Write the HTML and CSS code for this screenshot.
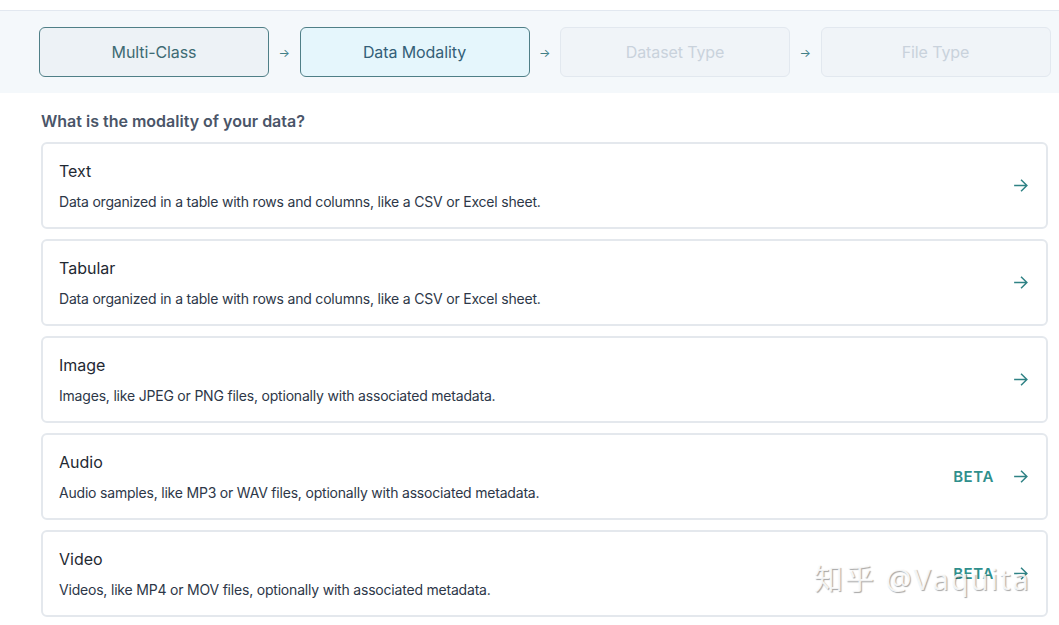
FILE: index.html
```html
<!DOCTYPE html>
<html lang="en">
<head>
  <meta charset="UTF-8" />
  <meta name="viewport" content="width=device-width, initial-scale=1.0" />
  <title>Data Modality</title>
  <link rel="stylesheet" href="styles.css">
</head>
<body>
  <div class="steps">
    <div class="step done">Multi-Class</div>
    <span class="step-arrow">&rarr;</span>
    <div class="step current">Data Modality</div>
    <span class="step-arrow">&rarr;</span>
    <div class="step todo">Dataset Type</div>
    <span class="step-arrow">&rarr;</span>
    <div class="step todo">File Type</div>
  </div>

  <div class="container">
    <h2 class="question">What is the modality of your data?</h2>

    <div class="option">
      <div class="option-text">
        <div class="option-title">Text</div>
        <div class="option-desc">Data organized in a table with rows and columns, like a CSV or Excel sheet.</div>
      </div>
      <svg class="go" viewBox="0 0 16 16"><path d="M2 8h12M8.5 2.5l5.5 5.5-5.5 5.5"/></svg>
    </div>

    <div class="option">
      <div class="option-text">
        <div class="option-title">Tabular</div>
        <div class="option-desc">Data organized in a table with rows and columns, like a CSV or Excel sheet.</div>
      </div>
      <svg class="go" viewBox="0 0 16 16"><path d="M2 8h12M8.5 2.5l5.5 5.5-5.5 5.5"/></svg>
    </div>

    <div class="option">
      <div class="option-text">
        <div class="option-title">Image</div>
        <div class="option-desc">Images, like JPEG or PNG files, optionally with associated metadata.</div>
      </div>
      <svg class="go" viewBox="0 0 16 16"><path d="M2 8h12M8.5 2.5l5.5 5.5-5.5 5.5"/></svg>
    </div>

    <div class="option">
      <div class="option-text">
        <div class="option-title">Audio</div>
        <div class="option-desc">Audio samples, like MP3 or WAV files, optionally with associated metadata.</div>
      </div>
      <span class="beta">BETA</span>
      <svg class="go" viewBox="0 0 16 16"><path d="M2 8h12M8.5 2.5l5.5 5.5-5.5 5.5"/></svg>
    </div>

    <div class="option">
      <div class="option-text">
        <div class="option-title">Video</div>
        <div class="option-desc">Videos, like MP4 or MOV files, optionally with associated metadata.</div>
      </div>
      <span class="beta">BETA</span>
      <svg class="go" viewBox="0 0 16 16"><path d="M2 8h12M8.5 2.5l5.5 5.5-5.5 5.5"/></svg>
    </div>
  </div>

  <div class="watermark">知乎 @Vaquita</div>
</body>
</html>
```

FILE: styles.css
```css
body {
  font-family: Inter, 'Noto Sans', sans-serif;
  margin: 0;
  padding: 10px 0 0;
  background-color: #fff;
  color: #2d3748;
  position: relative;
  overflow: hidden;
}
.steps {
  display: flex;
  align-items: center;
  padding: 16px 0 16px 39px;
  background-color: #f4f8fb;
  border-top: 1px solid #e2e8f0;
}
.step {
  box-sizing: border-box;
  flex: 0 0 230px;
  height: 50px;
  display: flex;
  align-items: center;
  justify-content: center;
  border-radius: 6px;
  font-size: 16px;
  letter-spacing: -0.1px;
}
.step.done {
  background-color: #edf2f6;
  border: 1px solid #4f7f87;
  color: #3d6b73;
}
.step.current {
  background-color: #e5f6fc;
  border: 1px solid #4f7f87;
  color: #345f78;
}
.step.todo {
  background-color: #f0f4f8;
  border: 1px solid #e2e8ef;
  color: #c9d2dc;
}
.step-arrow {
  flex: 0 0 30.5px;
  text-align: center;
  font-size: 12px;
  color: #3f7f86;
}
.container {
  padding: 0 11px 0 41px;
}
.question {
  font-size: 16px;
  font-weight: 600;
  color: #4a5568;
  margin: 17px 0 10px;
  line-height: 22px;
}
.option {
  box-sizing: border-box;
  height: 87px;
  display: flex;
  align-items: center;
  border: 2px solid #e4e8ed;
  border-radius: 6px;
  padding: 0 17px 0 16px;
  margin-bottom: 10px;
}
.option-text {
  flex: 1;
}
.option-title {
  font-size: 16px;
  line-height: 22px;
  color: #1f2933;
  margin-bottom: 10px;
}
.option-desc {
  font-size: 14px;
  line-height: 20px;
  color: #2d3748;
  letter-spacing: -0.2px;
}
.beta {
  font-size: 15px;
  font-weight: 600;
  letter-spacing: 0.6px;
  color: #2f8f8c;
  margin-right: 18px;
}
.go {
  width: 17px;
  height: 17px;
  fill: none;
  stroke: #2f8285;
  stroke-width: 1.4;
}
.watermark {
  position: absolute;
  left: 814px;
  top: 556px;
  font-size: 29px;
  color: rgba(255, 255, 255, 0.85);
  text-shadow: 1px 1px 1px rgba(0, 0, 0, 0.35);
  font-family: 'Noto Sans', 'Noto Sans CJK SC', sans-serif;
  letter-spacing: 2px;
}
```
